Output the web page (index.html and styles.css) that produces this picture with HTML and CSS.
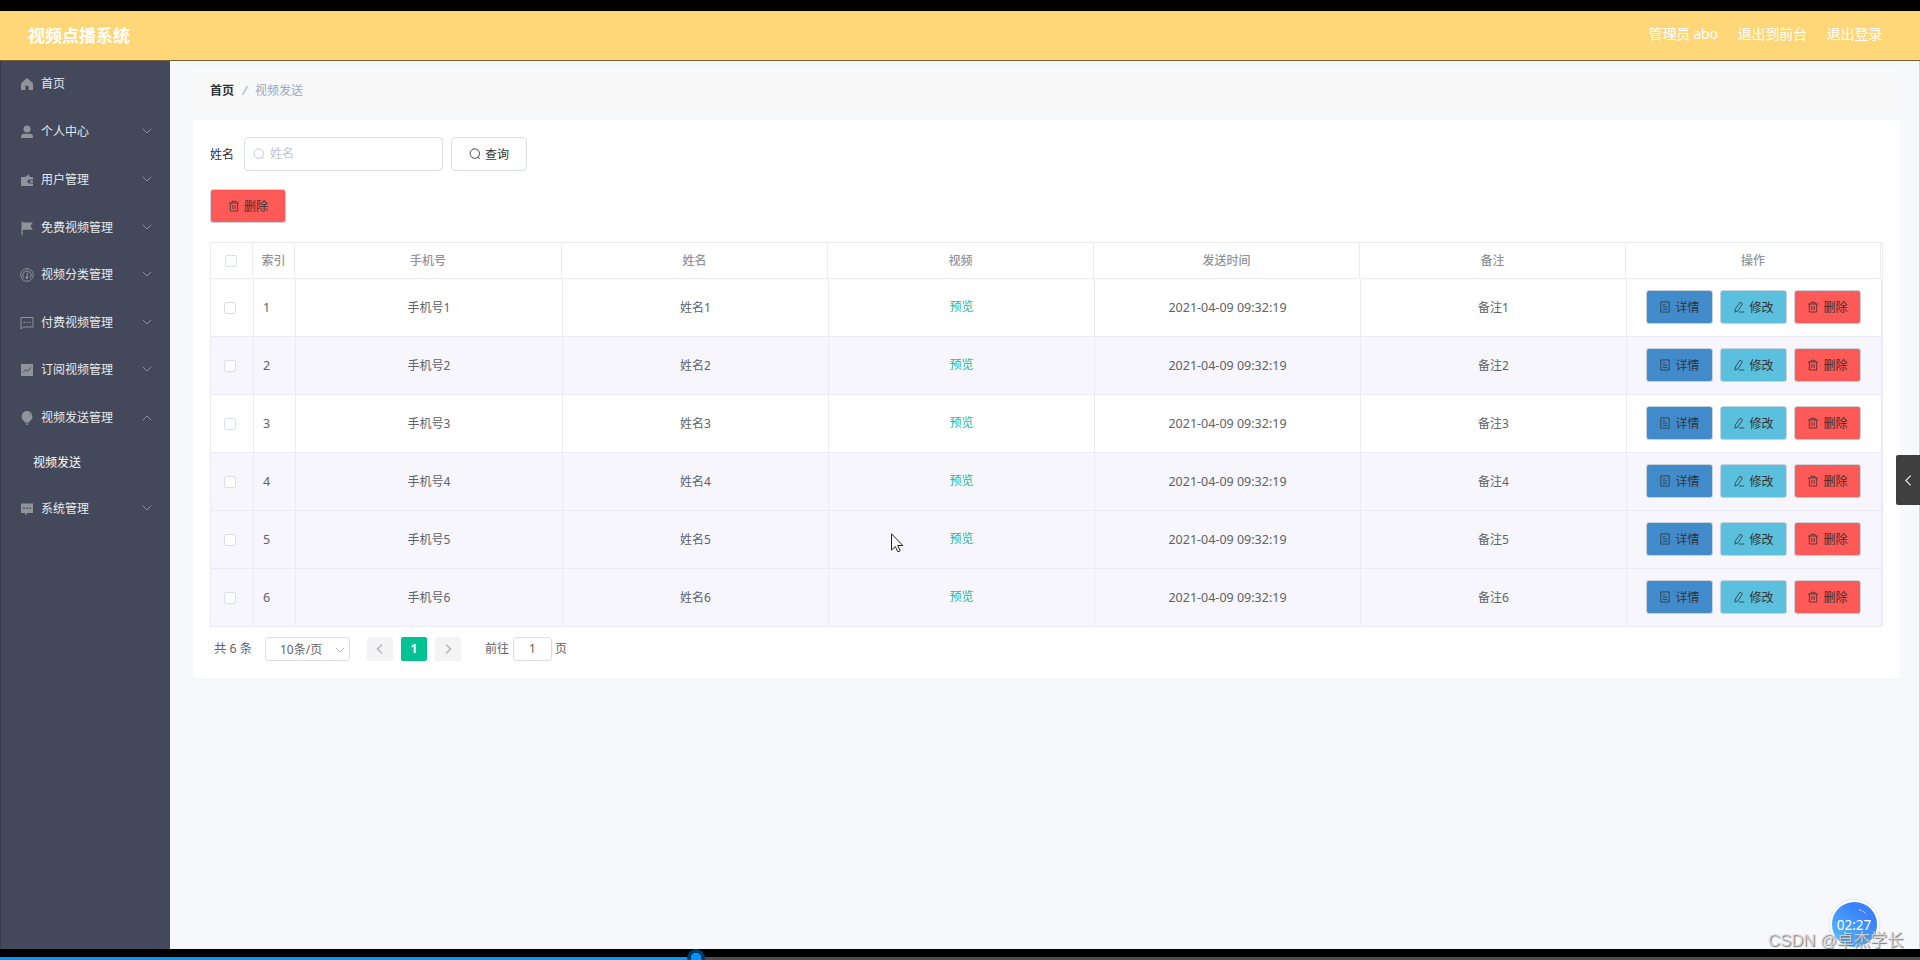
FILE: index.html
```html
<!DOCTYPE html>
<html lang="zh-CN">
<head>
    <meta charset="UTF-8">
    <meta name="viewport" content="width=device-width, initial-scale=1.0">
    <title>视频点播系统</title>
    <link rel="stylesheet" href="styles.css">
</head>
<body>
    <!-- icons -->
    <svg width="0" height="0" class="sprite">
        <symbol id="down" viewBox="0 0 12 12"><path d="M1.8 3.8L6 8l4.200-4.200" fill="none" stroke="currentColor"/></symbol>
        <symbol id="left" viewBox="0 0 12 12"><path d="M8 1.500L3.500 6 8 10.500" fill="none" stroke="currentColor"/></symbol>
        <symbol id="search" viewBox="0 0 12 12"><g fill="none" stroke="currentColor" stroke-width=".9"><circle cx="5.800" cy="5.600" r="4.700"/><path d="M9 9.100l1.800 1.700"/></g></symbol>
        <symbol id="trash" viewBox="0 0 12 12"><path d="M1 3h10M4 3V1.300h4V3M2.300 3v8h7.400V3M4.800 5v4M7.200 5v4" fill="none" stroke="currentColor" stroke-width=".8"/></symbol>
        <symbol id="doc" viewBox="0 0 12 12"><path d="M1.800.900h8.400v10.200H1.800zM3.800 3.800h2.400M3.800 6h4.400M3.800 8.400h4.400" fill="none" stroke="currentColor" stroke-width=".8"/></symbol>
        <symbol id="edit" viewBox="0 0 12 12"><path d="M7 1.200l2.500 1.500-4.600 7.200-3 1.200.4-3.100zM6 11h5.200" fill="none" stroke="currentColor" stroke-width=".8"/></symbol>
        <symbol id="home" viewBox="0 0 14 14"><path d="M7 1l6 5.200V13H8.700V8.800H5.300V13H1V6.200z" fill="currentColor"/></symbol>
        <symbol id="user" viewBox="0 0 14 14"><g fill="currentColor"><circle cx="7" cy="4" r="3.500"/><path d="M1 13v-1.500C1 9.500 2.500 8.800 4 8.800h6c1.500 0 3 .7 3 2.700V13z"/></g></symbol>
        <symbol id="wallet" viewBox="0 0 14 14"><path d="M1 4h4L9 1.500 9.800 4H13v2.500H9.500a2 2 0 0 0 0 4H13V13H1zM10 7.600h3v1.800h-3z" fill="currentColor"/></symbol>
        <symbol id="flag" viewBox="0 0 14 14"><path d="M1.500.500h1.300V1.500h10L10.500 5l2.300 3.800h-10v5H1.500z" fill="currentColor"/></symbol>
        <symbol id="gauge" viewBox="0 0 14 14"><g fill="none" stroke="currentColor"><circle cx="7" cy="7" r="6.300"/><path d="M3.800 10A4.200 4.200 0 1 1 10.200 10M7.700 4.500L7 9"/></g><circle cx="6.900" cy="9.600" r="1.300" fill="currentColor"/></symbol>
        <symbol id="chat" viewBox="0 0 14 14"><path d="M1 1.500h12v9.500H3.500L1 13z" fill="none" stroke="currentColor"/><path d="M3.500 5.700h1.500v1.300H3.500zM6.300 5.700h1.500v1.300H6.300zM9 5.700h1.500v1.300H9z" fill="currentColor"/></symbol>
        <symbol id="chart" viewBox="0 0 14 14"><path d="M1 1h12v12H1z" fill="currentColor"/><path d="M3 9.500l2.500-2.700 2 1.500L11 4.500" fill="none" stroke="#43495b"/></symbol>
        <symbol id="bulb" viewBox="0 0 14 14"><path d="M7 0a5.500 5.500 0 0 1 3 10L9 11.500H5L4 10A5.500 5.500 0 0 1 7 0zM5.200 12.400h3.600L8 13.800H6z" fill="currentColor"/><path d="M9 2.300a3.200 3.200 0 0 1 1.500 2" fill="none" stroke="#6b6f7b"/></symbol>
        <symbol id="chat-fill" viewBox="0 0 14 14"><path d="M1 1.500h12V11H7.500L5 13.500V11H1z" fill="currentColor"/><path d="M3.300 5.500h1.500V7H3.300zM6.300 5.500h1.500V7H6.300zM9.300 5.500h1.500V7H9.300z" fill="#43495b"/></symbol>
    </svg>

    <div class="screen">
        <header class="header">
            <div class="title">视频点播系统</div>
            <nav class="user-nav">
                <a>管理员 abo</a>
                <a>退出到前台</a>
                <a>退出登录</a>
            </nav>
        </header>

        <div class="container">
            <aside class="sidebar">
                <div class="menu-item"><svg class="menu-icon"><use href="#home"/></svg><span>首页</span></div>
                <div class="menu-item"><svg class="menu-icon"><use href="#user"/></svg><span>个人中心</span><svg class="arrow"><use href="#down"/></svg></div>
                <div class="menu-item"><svg class="menu-icon"><use href="#wallet"/></svg><span>用户管理</span><svg class="arrow"><use href="#down"/></svg></div>
                <div class="menu-item"><svg class="menu-icon"><use href="#flag"/></svg><span>免费视频管理</span><svg class="arrow"><use href="#down"/></svg></div>
                <div class="menu-item"><svg class="menu-icon"><use href="#gauge"/></svg><span>视频分类管理</span><svg class="arrow"><use href="#down"/></svg></div>
                <div class="menu-item"><svg class="menu-icon"><use href="#chat"/></svg><span>付费视频管理</span><svg class="arrow"><use href="#down"/></svg></div>
                <div class="menu-item"><svg class="menu-icon"><use href="#chart"/></svg><span>订阅视频管理</span><svg class="arrow"><use href="#down"/></svg></div>
                <div class="menu-item"><svg class="menu-icon"><use href="#bulb"/></svg><span>视频发送管理</span><svg class="arrow open"><use href="#down"/></svg></div>
                <div class="sub-item">视频发送</div>
                <div class="menu-item"><svg class="menu-icon"><use href="#chat-fill"/></svg><span>系统管理</span><svg class="arrow"><use href="#down"/></svg></div>
            </aside>

            <main class="main">
                <div class="breadcrumb"><b>首页</b><i>/</i><span>视频发送</span></div>

                <section class="card">
                    <div class="search-form">
                        <label>姓名</label>
                        <div class="search-input"><svg class="icon"><use href="#search"/></svg><span>姓名</span></div>
                        <button class="btn btn-search"><svg class="icon"><use href="#search"/></svg>查询</button>
                    </div>
                    <button class="btn btn-danger btn-batch"><svg class="icon"><use href="#trash"/></svg>删除</button>

                    <div class="table">
                        <div class="row head">
                            <div class="cell"><span class="checkbox"></span></div>
                            <div class="cell">索引</div>
                            <div class="cell">手机号</div>
                            <div class="cell">姓名</div>
                            <div class="cell">视频</div>
                            <div class="cell">发送时间</div>
                            <div class="cell">备注</div>
                            <div class="cell">操作</div>
                        </div>
                        <div class="row">
                            <div class="cell"><span class="checkbox"></span></div>
                            <div class="cell index">1</div>
                            <div class="cell">手机号1</div>
                            <div class="cell">姓名1</div>
                            <div class="cell"><a class="preview">预览</a></div>
                            <div class="cell date">2021-04-09 09:32:19</div>
                            <div class="cell">备注1</div>
                            <div class="cell actions">
                                <button class="btn btn-info"><svg class="icon"><use href="#doc"/></svg>详情</button>
                                <button class="btn btn-edit"><svg class="icon"><use href="#edit"/></svg>修改</button>
                                <button class="btn btn-danger"><svg class="icon"><use href="#trash"/></svg>删除</button>
                            </div>
                        </div>
                        <div class="row striped">
                            <div class="cell"><span class="checkbox"></span></div>
                            <div class="cell index">2</div>
                            <div class="cell">手机号2</div>
                            <div class="cell">姓名2</div>
                            <div class="cell"><a class="preview">预览</a></div>
                            <div class="cell date">2021-04-09 09:32:19</div>
                            <div class="cell">备注2</div>
                            <div class="cell actions">
                                <button class="btn btn-info"><svg class="icon"><use href="#doc"/></svg>详情</button>
                                <button class="btn btn-edit"><svg class="icon"><use href="#edit"/></svg>修改</button>
                                <button class="btn btn-danger"><svg class="icon"><use href="#trash"/></svg>删除</button>
                            </div>
                        </div>
                        <div class="row">
                            <div class="cell"><span class="checkbox"></span></div>
                            <div class="cell index">3</div>
                            <div class="cell">手机号3</div>
                            <div class="cell">姓名3</div>
                            <div class="cell"><a class="preview">预览</a></div>
                            <div class="cell date">2021-04-09 09:32:19</div>
                            <div class="cell">备注3</div>
                            <div class="cell actions">
                                <button class="btn btn-info"><svg class="icon"><use href="#doc"/></svg>详情</button>
                                <button class="btn btn-edit"><svg class="icon"><use href="#edit"/></svg>修改</button>
                                <button class="btn btn-danger"><svg class="icon"><use href="#trash"/></svg>删除</button>
                            </div>
                        </div>
                        <div class="row striped">
                            <div class="cell"><span class="checkbox"></span></div>
                            <div class="cell index">4</div>
                            <div class="cell">手机号4</div>
                            <div class="cell">姓名4</div>
                            <div class="cell"><a class="preview">预览</a></div>
                            <div class="cell date">2021-04-09 09:32:19</div>
                            <div class="cell">备注4</div>
                            <div class="cell actions">
                                <button class="btn btn-info"><svg class="icon"><use href="#doc"/></svg>详情</button>
                                <button class="btn btn-edit"><svg class="icon"><use href="#edit"/></svg>修改</button>
                                <button class="btn btn-danger"><svg class="icon"><use href="#trash"/></svg>删除</button>
                            </div>
                        </div>
                        <!-- hovered row -->
                        <div class="row striped">
                            <div class="cell"><span class="checkbox"></span></div>
                            <div class="cell index">5</div>
                            <div class="cell">手机号5</div>
                            <div class="cell">姓名5</div>
                            <div class="cell"><a class="preview">预览</a></div>
                            <div class="cell date">2021-04-09 09:32:19</div>
                            <div class="cell">备注5</div>
                            <div class="cell actions">
                                <button class="btn btn-info"><svg class="icon"><use href="#doc"/></svg>详情</button>
                                <button class="btn btn-edit"><svg class="icon"><use href="#edit"/></svg>修改</button>
                                <button class="btn btn-danger"><svg class="icon"><use href="#trash"/></svg>删除</button>
                            </div>
                        </div>
                        <div class="row striped">
                            <div class="cell"><span class="checkbox"></span></div>
                            <div class="cell index">6</div>
                            <div class="cell">手机号6</div>
                            <div class="cell">姓名6</div>
                            <div class="cell"><a class="preview">预览</a></div>
                            <div class="cell date">2021-04-09 09:32:19</div>
                            <div class="cell">备注6</div>
                            <div class="cell actions">
                                <button class="btn btn-info"><svg class="icon"><use href="#doc"/></svg>详情</button>
                                <button class="btn btn-edit"><svg class="icon"><use href="#edit"/></svg>修改</button>
                                <button class="btn btn-danger"><svg class="icon"><use href="#trash"/></svg>删除</button>
                            </div>
                        </div>
                    </div>

                    <div class="pagination">
                        <span class="total">共 6 条</span>
                        <div class="page-size"><span>10条/页</span><svg class="size-arrow"><use href="#down"/></svg></div>
                        <div class="pager">
                            <span class="page"><svg class="page-icon"><use href="#left"/></svg></span>
                            <span class="page active">1</span>
                            <span class="page"><svg class="page-icon flip"><use href="#left"/></svg></span>
                        </div>
                        <span>前往</span>
                        <div class="page-input">1</div>
                        <span>页</span>
                    </div>
                </section>
            </main>
        </div>
    </div>

    <div class="progress">
        <div class="played"></div>
        <div class="knob"></div>
    </div>

    <div class="drawer-toggle"><svg class="drawer-icon"><use href="#left"/></svg></div>
    <div class="timer">02:27<svg class="shine" viewBox="0 0 46 46"><path d="M28 8q5 1 8 5" fill="none" stroke="#fff" stroke-dasharray="3 1.500" opacity=".8"/></svg></div>
    <div class="watermark">CSDN @卓杰学长</div>
    <svg class="cursor" viewBox="0 0 13 20"><path d="M.5.800v16.200l3.800-3.500 2.500 5.300 2.400-1.100-2.500-5.200h5.100z" fill="#fff" stroke="#222"/></svg>
</body>
</html>
```
FILE: styles.css
```css
* {
    box-sizing: border-box;
}

body {
    margin: 0;
    height: 960px;
    padding-top: 11px;
    background: #000;
    font-family: "Noto Sans", "Noto Sans CJK SC", sans-serif;
    font-size: 12px;
    line-height: 16px;
    color: #606266;
    overflow: hidden;
}

.sprite {
    position: absolute;
}

.screen {
    height: 938px;
    display: flex;
    flex-direction: column;
}

/* header */
.header {
    height: 50px;
    padding: 0 38px 2px 28px;
    display: flex;
    justify-content: space-between;
    align-items: center;
    background: #ffd678;
    border-bottom: 1px solid #76602f;
    color: #fff;
}

.title {
    font-size: 17px;
    font-weight: bold;
    line-height: 24px;
    padding-top: 2px;
}

.user-nav {
    display: flex;
    gap: 20px;
    font-size: 14px;
    line-height: 20px;
    letter-spacing: -0.2px;
    padding-bottom: 1px;
}

.container {
    flex: 1;
    display: flex;
    min-height: 0;
}

/* sidebar */
.sidebar {
    width: 170px;
    background: #43495b;
    border-left: 1px solid #383d4d;
    color: #e6e9ee;
}

.menu-item {
    height: 47.6px;
    padding: 0 17px 0 19px;
    display: flex;
    align-items: center;
}

.menu-item:first-child {
    padding-bottom: 2px;
}

.menu-item span {
    margin-left: 7px;
}

.menu-icon {
    width: 14px;
    height: 14px;
    color: #909399;
}

.arrow {
    width: 12px;
    height: 12px;
    margin-left: auto;
    margin-top: -2px;
    color: #909399;
}

.arrow.open {
    transform: rotate(180deg);
    margin-top: 0;
}

.sub-item {
    height: 43px;
    line-height: 42px;
    padding-left: 32px;
    color: #fff;
}

/* content */
.main {
    flex: 1;
    padding: 9px 19px 0 23px;
    background: #f6f8fc;
    border-right: 1px solid #d5d7db;
}

.breadcrumb {
    height: 41px;
    padding: 1px 0 0 17px;
    display: flex;
    align-items: center;
    background: #f9f9f9;
    color: #97a8be;
}

.breadcrumb b {
    color: #303133;
}

.breadcrumb i {
    width: 21px;
    text-align: center;
}

.card {
    height: 558px;
    margin-top: 9px;
    padding: 17px;
    background: #fff;
}

.search-form {
    display: flex;
    align-items: center;
    height: 34px;
    color: #303133;
}

.search-form label {
    padding-top: 2px;
}

.search-input {
    width: 199px;
    height: 34px;
    margin: 0 8px 0 10px;
    padding-left: 8px;
    display: flex;
    align-items: center;
    gap: 5px;
    border: 1px solid #dcdfe6;
    border-radius: 4px;
    color: #c0c4cc;
}

.icon {
    width: 12px;
    height: 12px;
}

.btn {
    width: 67px;
    height: 34px;
    padding: 0 0 1px;
    display: flex;
    justify-content: center;
    align-items: center;
    gap: 4px;
    border: 1px solid #c9d3dd;
    border-radius: 3px;
    background: #fff;
    font-family: inherit;
    font-size: 12px;
    color: #333;
}

.btn-search {
    width: 76px;
    border-color: #dcdfe6;
    border-radius: 4px;
}

.btn-batch {
    width: 76px;
    margin: 18px 0 19px;
}

.btn-danger {
    background: #ff5a57;
}

.btn-info {
    background: #428bca;
}

.btn-edit {
    background: #5bc0de;
}

/* table */
.table {
    border: 1px solid #ebebf3;
    border-bottom: none;
}

.row {
    height: 58px;
    display: grid;
    grid-template-columns: 43px 42px 267px 266px 266px 266px 266px 255px;
    border-bottom: 1px solid #ebebf3;
}

.row.striped {
    background: #f6f6fc;
}

.row.head {
    width: 1670px;
    height: 36px;
    grid-template-columns: 42px 42px 267px 266px 266px 266px 266px 255px;
    font-weight: 500;
    color: #909399;
}

.cell {
    display: flex;
    justify-content: center;
    align-items: center;
    border-right: 1px solid #ebebf3;
}

.index {
    justify-content: flex-start;
    padding-left: 9px;
    font-size: 12.5px;
}

.date {
    font-size: 12.5px;
}

.checkbox {
    width: 12px;
    height: 12px;
    border: 1px solid #dcdfe6;
    border-radius: 2px;
    background: #fff;
}

.head .checkbox {
    margin-right: 1px;
}

.row:not(.head) .checkbox {
    margin-right: 4px;
}

.preview {
    color: #1fb996;
    padding-bottom: 2px;
}

.actions {
    gap: 7px;
    padding: 0 1px 1px 0;
}

/* pagination */
.pagination {
    display: flex;
    align-items: center;
    padding: 10px 0 0 4px;
}

.total {
    width: 51px;
    font-size: 12.3px;
}

.page-size {
    width: 85px;
    height: 24px;
    padding: 1px 3px 0 14px;
    display: flex;
    justify-content: space-between;
    align-items: center;
    border: 1px solid #dcdfe6;
    border-radius: 3px;
}

.size-arrow {
    width: 12px;
    height: 12px;
    color: #c0c4cc;
}

.pager {
    display: flex;
    gap: 8px;
    margin: 0 24px 0 17px;
}

.page {
    width: 26px;
    height: 24px;
    display: flex;
    justify-content: center;
    align-items: center;
    background: #f4f4f5;
    border-radius: 2px;
    color: #b4b8bf;
}

.page.active {
    background: #00c292;
    color: #fff;
    font-weight: bold;
}

.page-icon {
    width: 12px;
    height: 12px;
    stroke-width: 1.6;
}

.flip {
    transform: rotate(180deg);
}

.page-input {
    width: 39px;
    height: 24px;
    margin: 0 3px 0 4px;
    border: 1px solid #dcdfe6;
    border-radius: 3px;
    text-align: center;
    line-height: 21px;
}

/* player progress bar */
.progress {
    position: absolute;
    left: 0;
    top: 949px;
    width: 100%;
    height: 11px;
    padding-top: 8px;
    background: linear-gradient(#000 8px, #4d4d4d 8px);
}

.played {
    width: 696px;
    height: 3px;
    background: #0094ff;
}

.knob {
    position: absolute;
    left: 687px;
    top: 0;
    width: 18px;
    height: 11px;
    background: radial-gradient(circle at 9px 9px, #0094ff 5px, #003b66 5.5px, #003b66 8.500px, transparent 9px);
}

.drawer-toggle {
    position: absolute;
    right: 0;
    top: 455px;
    width: 24px;
    height: 50px;
    display: flex;
    justify-content: center;
    align-items: center;
    background: #3f3f3f;
    border-radius: 2px 0 0 2px;
    color: #eee;
}

.drawer-icon {
    width: 13px;
    height: 13px;
}

.timer {
    position: absolute;
    left: 1830px;
    top: 900px;
    width: 49px;
    height: 49px;
    border: 2px solid #fff;
    border-radius: 50%;
    background: linear-gradient(35deg, #5cc4ff, #3b83fc 70%);
    box-shadow: 0 0 3px rgba(0, 0, 0, 0.15);
    color: #fff;
    font-size: 13.5px;
    line-height: 46px;
    text-align: center;
    text-indent: -1px;
}

.shine {
    position: absolute;
    left: 0;
    top: 0;
    width: 44px;
    height: 44px;
}

.watermark {
    position: absolute;
    left: 1768px;
    top: 929px;
    font-family: "Liberation Sans", "Noto Sans CJK SC", sans-serif;
    font-size: 16.7px;
    line-height: 24px;
    white-space: nowrap;
    color: rgba(225, 225, 225, 0.75);
    text-shadow: 1px 1px 1px #777;
}

.cursor {
    position: absolute;
    left: 891px;
    top: 533px;
    width: 13px;
    height: 20px;
}
```
